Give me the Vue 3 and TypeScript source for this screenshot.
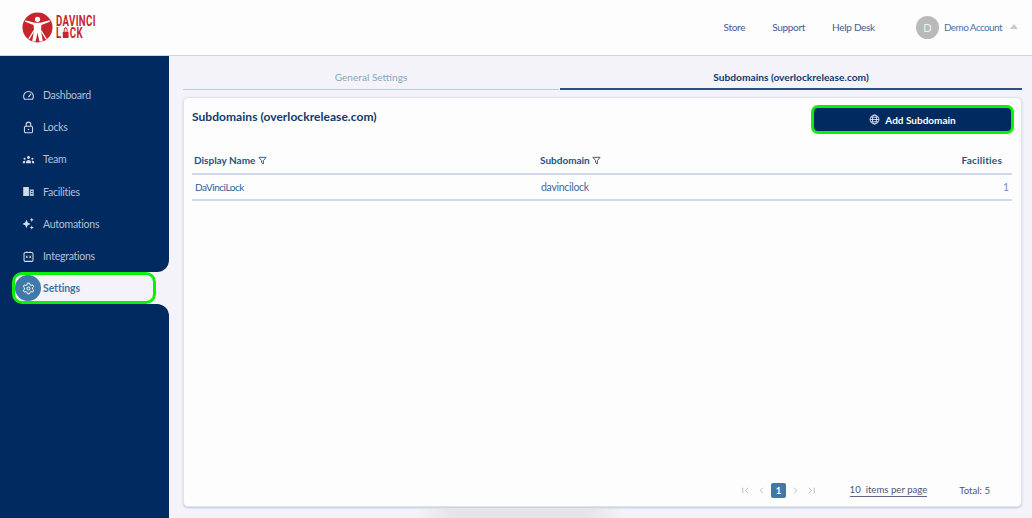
<script setup lang="ts">
interface NavItem {
  label: string
  icon: string
}

const topNav: NavItem[] = [
  { label: 'Dashboard', icon: 'dashboard' },
  { label: 'Locks', icon: 'lock' },
  { label: 'Team', icon: 'team' },
  { label: 'Facilities', icon: 'facilities' },
  { label: 'Automations', icon: 'automations' },
  { label: 'Integrations', icon: 'integrations' },
]

const headerLinks = ['Store', 'Support', 'Help Desk']
</script>

<template>
  <div class="page">
    <header class="topbar">
      <div class="logo">
        <svg class="logo-mark" viewBox="0 0 32 32">
          <circle cx="16" cy="16" r="15.5" fill="#c8242b" />
          <circle cx="16" cy="7.6" r="2.7" fill="#fff" />
          <path d="M3.5 8.5 L13 11 H19 L28.5 8.5 L28.8 10 L20 13.5 L19.6 19 L21.5 30.5 H18 L16 21.5 L14 30.5 H10.5 L12.4 19 L12 13.5 L3.2 10 Z" fill="#fff" />
          <path d="M12.5 19 L7 28 M19.5 19 L25 28" stroke="#fff" stroke-width="1.2" />
        </svg>
        <div class="logo-text">
          <span class="logo-line">DAVINCI</span>
          <span class="logo-line logo-lock"><span>L</span><svg class="logo-o" viewBox="0 0 10 13"><path d="M2.5 6V3.6a2.5 2.5 0 0 1 5 0V6" fill="none" stroke="#c8242b" stroke-width="1.5" /><rect y="5.5" width="10" height="7.5" rx="1" fill="#c8242b" /></svg><span>CK</span></span>
        </div>
      </div>
      <nav class="top-links">
        <a v-for="link in headerLinks" :key="link" class="top-link">{{ link }}</a>
      </nav>
      <div class="account">
        <span class="avatar">D</span>
        <span class="account-name">Demo Account</span>
        <span class="caret" />
      </div>
    </header>

    <div class="body">
      <aside class="sidebar">
        <div class="nav-top">
          <a v-for="item in topNav" :key="item.label" class="nav-item">
            <svg class="nav-icon" viewBox="0 0 16 16" fill="none" stroke="currentColor" stroke-width="1.3">
              <template v-if="item.icon === 'dashboard'">
                <path d="M3 12.5h10a6 6 0 0 0 1-3.5A6 6 0 0 0 2 9a6 6 0 0 0 1 3.5Z" />
                <path d="M8 10l3-4" />
              </template>
              <template v-else-if="item.icon === 'lock'">
                <rect x="3" y="6.5" width="10" height="8" rx="1.5" />
                <path d="M5.2 6.5V4.2a2.8 2.8 0 0 1 5.6 0v2.3" />
                <circle cx="8" cy="10.5" r="1" fill="currentColor" stroke="none" />
              </template>
              <template v-else-if="item.icon === 'team'">
                <g fill="currentColor" stroke="none">
                  <circle cx="8" cy="5.5" r="1.8" />
                  <circle cx="3.2" cy="7" r="1.3" />
                  <circle cx="12.8" cy="7" r="1.3" />
                  <path d="M4.8 12.5c0-2.8 1.3-4 3.2-4s3.2 1.2 3.2 4Z" />
                  <path d="M.8 12.5c0-2 1-3 2.4-3 .4 0 .6.1.8.2-.3.8-.4 1.8-.4 2.8ZM15.2 12.5c0-2-1-3-2.4-3-.4 0-.6.1-.8.2.3.8.4 1.8.4 2.8Z" />
                </g>
              </template>
              <template v-else-if="item.icon === 'facilities'">
                <g fill="currentColor" stroke="none">
                  <path d="M1.5 2.5h7v11h-7Z" />
                  <path d="M9.5 5.5h5v8h-5Z" opacity=".85" />
                </g>
                <path d="M11 8h2M11 10.5h2" stroke="#002a60" stroke-width="1" />
              </template>
              <template v-else-if="item.icon === 'automations'">
                <g fill="currentColor" stroke="none">
                  <path d="M5.5 3.5l1.6 3.4 3.4 1.6-3.4 1.6-1.6 3.4-1.6-3.4L.5 8.5l3.4-1.6Z" />
                  <path d="M12 1l.8 1.7 1.7.8-1.7.8-.8 1.7-.8-1.7-1.7-.8 1.7-.8Z" />
                  <path d="M12 10.5l.8 1.7 1.7.8-1.7.8-.8 1.7-.8-1.7-1.700-.8 1.7-.8Z" />
                </g>
              </template>
              <template v-else-if="item.icon === 'integrations'">
                <rect x="2.5" y="3" width="11" height="11" rx="1.5" />
                <path d="M6 1.5V3M10 1.5V3M4.8 7L7 10M7 7l-2.200 3M9 7l2.200 3M11.200 7L9 10" stroke-width="1" />
              </template>
            </svg>
            <span>{{ item.label }}</span>
          </a>
        </div>
        <div class="nav-active-row">
          <a class="nav-active">
            <span class="nav-active-icon">
              <svg viewBox="0 0 16 17" fill="none" stroke="#fff" stroke-width="1.3">
                <path d="M6.6 1.5h2.8l.4 2 1.7 1 1.9-.7 1.4 2.4-1.5 1.3v2l1.5 1.3-1.4 2.4-1.9-.7-1.7 1-.4 2H6.6l-.4-2-1.7-1-1.9.7-1.400-2.400 1.500-1.300v-2L1.200 6.200l1.400-2.400 1.900.7 1.700-1Z" />
                <circle cx="8" cy="8.5" r="2" />
              </svg>
            </span>
            <span class="nav-active-label">Settings</span>
          </a>
        </div>
        <div class="nav-bottom" />
      </aside>

      <main class="main">
        <div class="tabs">
          <div class="tab">General Settings</div>
          <div class="tab tab-active">Subdomains (overlockrelease.com)</div>
        </div>

        <section class="card">
          <div class="card-head">
            <h2 class="card-title">Subdomains (overlockrelease.com)</h2>
            <button class="add-btn" type="button">
              <svg class="globe" viewBox="0 0 16 16" fill="none" stroke="#fff" stroke-width="1.1">
                <circle cx="8" cy="8" r="6.5" />
                <ellipse cx="8" cy="8" rx="3" ry="6.5" />
                <path d="M1.5 8h13M2.5 4.7h11M2.5 11.3h11" />
              </svg>
              Add Subdomain
            </button>
          </div>

          <div class="table">
            <div class="row row-head">
              <span class="col-name">Display Name
                <svg class="filter" viewBox="0 0 10 10" fill="none" stroke="currentColor" stroke-width="1"><path d="M1 1.5h8L6 5.2v3.5L4 7.5V5.2Z" /></svg>
              </span>
              <span class="col-domain">Subdomain
                <svg class="filter" viewBox="0 0 10 10" fill="none" stroke="currentColor" stroke-width="1"><path d="M1 1.5h8L6 5.2v3.5L4 7.5V5.2Z" /></svg>
              </span>
              <span class="col-count col-facilities">Facilities</span>
            </div>
            <div class="row row-data">
              <span class="col-name cell-link">DaVinciLock</span>
              <span class="col-domain cell-domain">davincilock</span>
              <span class="col-count cell-count">1</span>
            </div>
          </div>

          <div class="pager">
            <span class="pager-arrow">
              <svg viewBox="0 0 10 10" fill="none" stroke="currentColor" stroke-width="1"><path d="M2 2v6M8 2L5 5l3 3" /></svg>
            </span>
            <span class="pager-arrow">
              <svg viewBox="0 0 10 10" fill="none" stroke="currentColor" stroke-width="1"><path d="M6.5 2L3.5 5l3 3" /></svg>
            </span>
            <span class="pager-current">1</span>
            <span class="pager-arrow">
              <svg viewBox="0 0 10 10" fill="none" stroke="currentColor" stroke-width="1"><path d="M3.5 2l3 3-3 3" /></svg>
            </span>
            <span class="pager-arrow">
              <svg viewBox="0 0 10 10" fill="none" stroke="currentColor" stroke-width="1"><path d="M2 2l3 3-3 3M8 2v6" /></svg>
            </span>
            <span class="page-size">10&nbsp;&nbsp;items per page</span>
            <span class="total">Total: 5</span>
          </div>
        </section>
      </main>
    </div>
    <div class="bottom-shade" />
  </div>
</template>

<style scoped>
.page {
  position: relative;
  width: 1032px;
  height: 518px;
  display: flex;
  flex-direction: column;
  overflow: hidden;
  background: #f3f3f9;
  font-family: Lato, Roboto, sans-serif;
}

.bottom-shade {
  position: absolute;
  left: 415px;
  bottom: 0;
  width: 210px;
  height: 10px;
  background: linear-gradient(90deg, transparent, #e4e4e9 18%, #e4e4e9 82%, transparent);
}

.topbar {
  height: 55px;
  flex: none;
  display: flex;
  align-items: center;
  background: #fdfdfe;
  border-bottom: 1px solid #ccd5e4;
  box-sizing: content-box;
  padding-left: 22px;
}

.logo {
  display: flex;
  align-items: center;
  gap: 3px;
}

.logo-mark {
  width: 31px;
  height: 31px;
}

.logo-text {
  display: flex;
  flex-direction: column;
  font-family: Roboto, sans-serif;
  font-weight: 700;
  font-size: 14px;
  letter-spacing: 0.5px;
  color: #c8242b;
}

.logo-line {
  height: 11.5px;
  line-height: 11.5px;
  transform: scaleX(0.69);
  transform-origin: left center;
}

.logo-lock {
  display: flex;
  align-items: center;
}

.logo-o {
  width: 10px;
  height: 11px;
  margin: 0 1px 1px;
}

.top-links {
  margin-left: auto;
  display: flex;
  gap: 27px;
  margin-right: 41px;
}

.top-link {
  padding-bottom: 1px;
  font-size: 10px;
  letter-spacing: -0.3px;
  color: #3d5c8e;
}

.account {
  display: flex;
  align-items: center;
  margin-right: 14px;
}

.avatar {
  width: 23px;
  height: 23px;
  border-radius: 50%;
  background: #b9b9b9;
  color: #f0f0f0;
  font-size: 11px;
  display: flex;
  align-items: center;
  justify-content: center;
}

.account-name {
  margin-left: 5px;
  padding-bottom: 1px;
  font-size: 10px;
  letter-spacing: -0.6px;
  color: #4a74a4;
}

.caret {
  margin-left: 8px;
  margin-bottom: 2px;
  border-left: 4.5px solid transparent;
  border-right: 4.5px solid transparent;
  border-bottom: 5px solid #c4c8d0;
}

.body {
  flex: 1;
  display: flex;
  min-height: 0;
}

.sidebar {
  width: 169px;
  flex: none;
  display: flex;
  flex-direction: column;
}

.nav-top {
  height: 216px;
  padding-top: 23px;
  box-sizing: border-box;
  background: #002a60;
  border-bottom-right-radius: 12px;
}

.nav-item {
  height: 32.2px;
  display: flex;
  align-items: center;
  padding-left: 22px;
  color: #b4c1d6;
  font-size: 10.5px;
  letter-spacing: -0.25px;
}

.nav-icon {
  width: 13px;
  height: 13px;
  margin-right: 8px;
  color: #d5dce8;
}

.nav-active-row {
  height: 32px;
  padding-left: 12px;
  display: flex;
  background: linear-gradient(90deg, #002a60 30px, #f3f3f9 30px);
}

.nav-active {
  width: 144px;
  box-sizing: border-box;
  display: flex;
  align-items: center;
  gap: 2px;
  background: #f3f3f9;
  border: 3px solid #0bf00b;
  border-radius: 10px;
  color: #3c77a8;
  font-size: 10.5px;
  font-weight: 700;
  letter-spacing: -0.1px;
}

.nav-active-label {
  padding-bottom: 1px;
}

.nav-active-icon {
  width: 26px;
  height: 26px;
  flex: none;
  border-radius: 50%;
  background: #3f79a9;
  display: flex;
  align-items: center;
  justify-content: center;
}

.nav-active-icon svg {
  width: 13px;
  height: 13px;
}

.nav-bottom {
  flex: 1;
  background: #002a60;
  border-top-right-radius: 12px;
}

.main {
  flex: 1;
  min-width: 0;
  padding: 12px 10px 11px 14px;
  display: flex;
  flex-direction: column;
}

.tabs {
  display: grid;
  grid-template-columns: 376px 1fr;
  gap: 1px;
  height: 22px;
  flex: none;
  margin-bottom: 7px;
}

.tab {
  display: flex;
  justify-content: center;
  padding-top: 3px;
  box-sizing: border-box;
  border-bottom: 1px solid #b9cde0;
  font-size: 10.1px;
  color: #8ba6c0;
}

.tab-active {
  border-bottom: 2px solid #2f4f86;
  font-size: 10.2px;
  color: #0e3a6e;
  font-weight: 700;
}

.card {
  flex: 1;
  display: flex;
  flex-direction: column;
  min-height: 0;
  background: #fdfdfd;
  border-radius: 5px;
  border: 1px solid #dde6f0;
  box-shadow: 0 1px 2px rgba(120, 145, 185, 0.45);
  padding: 8px 9px 7px 8px;
}

.card-head {
  display: flex;
  justify-content: space-between;
  align-items: flex-start;
  height: 40px;
  flex: none;
}

.card-title {
  margin: 3px 0 0;
  font-size: 12px;
  font-weight: 700;
  letter-spacing: 0.05px;
  color: #0e3a6e;
}

.add-btn {
  width: 203px;
  height: 29px;
  margin: -1px -2px 0 0;
  box-sizing: border-box;
  display: flex;
  align-items: center;
  justify-content: center;
  gap: 5px;
  background: #002a60;
  border: 3px solid #0bf00b;
  border-radius: 7px;
  color: #fff;
  font-family: inherit;
  font-size: 10px;
  font-weight: 700;
}

.globe {
  width: 11px;
  height: 11px;
}

.row {
  display: flex;
  align-items: center;
  border-bottom: 2px solid #cfdae8;
}

.row-head {
  height: 27px;
  font-size: 10px;
  font-weight: 700;
  color: #1d5288;
}

.row-data {
  height: 24px;
  font-size: 10px;
}

.col-name {
  width: 348px;
  padding-left: 2px;
  box-sizing: border-box;
}

.col-domain {
  flex: 1;
}

.col-count {
  text-align: right;
  padding-right: 10px;
}

.col-facilities {
  letter-spacing: 0.2px;
}

.cell-link {
  padding-left: 3px;
  letter-spacing: -0.45px;
  color: #2b5f9b;
}

.cell-domain {
  padding-left: 1px;
  font-size: 10.5px;
  letter-spacing: -0.3px;
  color: #3a6a9c;
}

.cell-count {
  padding-right: 3px;
  font-size: 10.5px;
  color: #6c92b8;
}

.filter {
  width: 9px;
  height: 9px;
  vertical-align: -1px;
}

.pager {
  margin-top: auto;
  display: flex;
  align-items: center;
  justify-content: flex-end;
  padding-right: 22px;
  height: 18px;
  font-size: 9.6px;
  color: #4a5578;
}

.pager-arrow {
  width: 16.3px;
  height: 15px;
  display: flex;
  align-items: center;
  justify-content: center;
  color: #b0b8c6;
}

.pager-arrow svg {
  width: 9px;
  height: 9px;
}

.pager-current {
  width: 15px;
  height: 15px;
  border-radius: 2px;
  margin: 0 1px;
  background: #3f79a9;
  color: #fff;
  font-weight: 700;
  font-size: 9.5px;
  display: flex;
  align-items: center;
  justify-content: center;
}

.page-size {
  margin-left: 30px;
  border-bottom: 1px solid #5e6488;
  line-height: 12px;
}

.total {
  margin-left: 32px;
}
</style>

<style>
html,
body {
  margin: 0;
  background: #f3f3f9;
}
</style>
